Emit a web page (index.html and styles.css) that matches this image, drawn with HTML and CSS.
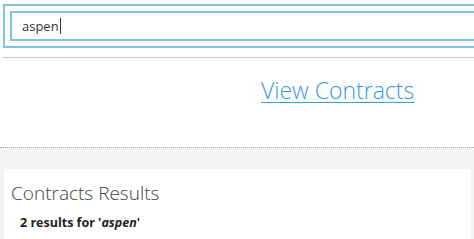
FILE: index.html
```html
<!DOCTYPE html>
<html>
<head>
<meta charset="utf-8">
<link rel="stylesheet" href="styles.css">
</head>
<body>
<div class="page">
  <div class="content">
    <div class="search-outer">
      <div class="search-inner">
        <span class="query">aspen</span><span class="caret"></span>
      </div>
    </div>
    <div class="rule"></div>
    <div class="link-row">
      <a class="view-link" href="#">View Contracts</a>
    </div>
    <div class="results-area">
      <div class="results-panel">
        <h2 class="results-title">Contracts Results</h2>
        <p class="results-count">2 results for '<em>aspen</em>'</p>
      </div>
    </div>
  </div>
</div>
</body>
</html>
```

FILE: styles.css
```css
html, body {
  margin: 0;
  padding: 0;
  background: #fff;
}
.page {
  width: 474px;
  height: 239px;
  overflow: hidden;
  font-family: "Open Sans", "Noto Sans", sans-serif;
  color: #333;
}
.content {
  width: 500px;
}
.search-outer {
  margin: 4px 0 0 3px;
  border: 2px solid #82c3e5;
  padding: 5px;
  height: 30px;
}
.search-inner {
  border: 2px solid #82c3e5;
  height: 26px;
  display: flex;
  align-items: center;
  padding-left: 10px;
}
.query {
  font-size: 13px;
  color: #333;
}
.caret {
  display: inline-block;
  width: 1px;
  height: 16px;
  background: #333;
  margin-left: 1px;
}
.rule {
  margin: 9px 0 0 3px;
  height: 1px;
  background: #c8c8c8;
}
.link-row {
  padding: 16px 0 0 261px;
  box-sizing: border-box;
  height: 89px;
}
.view-link {
  font-size: 23px;
  font-weight: 300;
  color: #3a9ad6;
  text-decoration: underline;
  text-decoration-thickness: 1px;
  text-underline-offset: 3px;
}
.results-area {
  border-top: 1px dotted #a8a8a8;
  background: #f3f3f3;
  padding: 21px 3px 0 4px;
  height: 72px;
  width: 467px;
}
.results-panel {
  background: #fff;
  height: 100%;
  padding: 11px 0 0 7px;
}
.results-title {
  margin: 0;
  font-size: 19px;
  font-weight: 300;
  color: #444;
  line-height: 26px;
}
.results-count {
  margin: 8px 0 0 9px;
  font-size: 12.5px;
  font-weight: 700;
  color: #222;
}
.results-count em {
  font-style: italic;
}
```
